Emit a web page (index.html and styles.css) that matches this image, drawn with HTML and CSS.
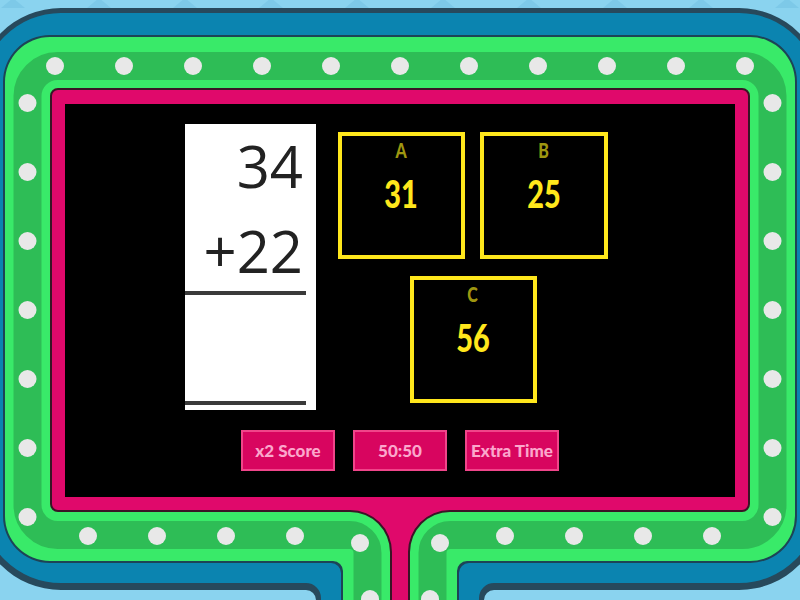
FILE: index.html
```html
<!DOCTYPE html>
<html lang="en">
<head>
<meta charset="utf-8">
<title>Gameshow quiz</title>
<link rel="stylesheet" href="styles.css">
</head>
<body>
<div class="stage">
  <svg class="frame" viewBox="0 0 800 600" width="800" height="600" aria-hidden="true">
    <rect width="800" height="600" fill="#8ad3ef"/>
    <g fill="#7dc9e8">
      <polygon points="1,8 13,-2 25,8"/><polygon points="87,8 99,-2 111,8"/><polygon points="173,8 185,-2 197,8"/>
      <polygon points="259,8 271,-2 283,8"/><polygon points="345,8 357,-2 369,8"/><polygon points="431,8 443,-2 455,8"/>
      <polygon points="517,8 529,-2 541,8"/><polygon points="603,8 615,-2 627,8"/><polygon points="689,8 701,-2 713,8"/>
      <polygon points="775,8 787,-2 799,8"/>
    </g>
    <path fill="#27495c" d="M61 8H739A85 85 0 0 1 824 93V505A85 85 0 0 1 739 590H494A10 10 0 0 0 484 600H316A10 10 0 0 0 306 590H61A85 85 0 0 1 -24 505V93A85 85 0 0 1 61 8Z"/>
    <path fill="#0b84b0" d="M61 13H739A80 80 0 0 1 819 93V503A80 80 0 0 1 739 583H494A15 15 0 0 0 479 598V600H321V598A15 15 0 0 0 306 583H61A80 80 0 0 1 -19 503V93A80 80 0 0 1 61 13Z"/>
    <path fill="#1d4456" d="M50 35H750A47 47 0 0 1 797 82V516A47 47 0 0 1 750 563H469A10 10 0 0 0 459 573V600H341V573A10 10 0 0 0 331 563H50A47 47 0 0 1 3 516V82A47 47 0 0 1 50 35Z"/>
    <path fill="#39ea69" d="M50 37H750A45 45 0 0 1 795 82V516A45 45 0 0 1 750 561H467A10 10 0 0 0 457 571V600H343V571A10 10 0 0 0 333 561H50A45 45 0 0 1 5 516V82A45 45 0 0 1 50 37Z"/>
    <path fill="none" stroke="#2ebd56" stroke-width="28" d="M367.5 610V553A18 18 0 0 0 349.5 535H57.5A30 30 0 0 1 27.5 505V96A30 30 0 0 1 57.5 66H742.5A30 30 0 0 1 772.5 96V505A30 30 0 0 1 742.5 535H450.5A18 18 0 0 0 432.5 553V610"/>
    <g fill="#e8e8e8">
      <circle cx="55" cy="66" r="9"/><circle cx="124" cy="66" r="9"/><circle cx="193" cy="66" r="9"/>
      <circle cx="262" cy="66" r="9"/><circle cx="331" cy="66" r="9"/><circle cx="400" cy="66" r="9"/>
      <circle cx="469" cy="66" r="9"/><circle cx="538" cy="66" r="9"/><circle cx="607" cy="66" r="9"/>
      <circle cx="676" cy="66" r="9"/><circle cx="745" cy="66" r="9"/>
      <circle cx="27.5" cy="103" r="9"/><circle cx="27.5" cy="172" r="9"/><circle cx="27.5" cy="241" r="9"/>
      <circle cx="27.5" cy="310" r="9"/><circle cx="27.5" cy="379" r="9"/><circle cx="27.5" cy="448" r="9"/>
      <circle cx="27.5" cy="517" r="9"/>
      <circle cx="772.5" cy="103" r="9"/><circle cx="772.5" cy="172" r="9"/><circle cx="772.5" cy="241" r="9"/>
      <circle cx="772.5" cy="310" r="9"/><circle cx="772.5" cy="379" r="9"/><circle cx="772.5" cy="448" r="9"/>
      <circle cx="772.5" cy="517" r="9"/>
      <circle cx="88" cy="536" r="9"/><circle cx="157" cy="536" r="9"/><circle cx="226" cy="536" r="9"/>
      <circle cx="295" cy="536" r="9"/><circle cx="360" cy="543" r="9"/><circle cx="370" cy="599" r="9"/>
      <circle cx="440" cy="543" r="9"/><circle cx="430" cy="599" r="9"/>
      <circle cx="505" cy="536" r="9"/><circle cx="574" cy="536" r="9"/><circle cx="643" cy="536" r="9"/>
      <circle cx="712" cy="536" r="9"/>
    </g>
    <path fill="#3a1526" d="M58 88H742A8 8 0 0 1 750 96V504A8 8 0 0 1 742 512H450A40 40 0 0 0 410 552V600H390V552A40 40 0 0 0 350 512H58A8 8 0 0 1 50 504V96A8 8 0 0 1 58 88Z"/>
    <path fill="#e0096b" d="M58 90H742A6 6 0 0 1 748 96V504A6 6 0 0 1 742 510H450A42 42 0 0 0 408 552V600H392V552A42 42 0 0 0 350 510H58A6 6 0 0 1 52 504V96A6 6 0 0 1 58 90Z"/>
  </svg>

  <main class="screen">
    <div class="quiz">
      <div class="card">
        <div class="sum"><span>34</span><span>+22</span></div>
        <div class="rule"></div>
        <div class="rule rule-end"></div>
      </div>
      <div class="answers">
        <div class="answer"><span class="letter">A</span><span class="value">31</span></div>
        <div class="answer"><span class="letter">B</span><span class="value">25</span></div>
        <div class="answer answer-c"><span class="letter">C</span><span class="value">56</span></div>
      </div>
    </div>
    <div class="powerups">
      <div class="powerup">x2 Score</div>
      <div class="powerup">50:50</div>
      <div class="powerup">Extra Time</div>
    </div>
  </main>
</div>
</body>
</html>
```

FILE: styles.css
```css
* {
  box-sizing: border-box;
}

body {
  margin: 0;
  background: #8ad3ef;
  font-family: "Lato", "Liberation Sans", sans-serif;
}

.stage {
  display: grid;
  width: 800px;
  height: 600px;
  overflow: hidden;
}

.frame,
.screen {
  grid-area: 1 / 1;
}

.frame {
  display: block;
}

.screen {
  margin: 104px 0 0 65px;
  width: 670px;
  height: 393px;
  background: #000;
  display: flex;
  flex-direction: column;
  align-items: center;
  padding-top: 20px;
}

.quiz {
  display: flex;
  gap: 22px;
  align-items: flex-start;
  margin-right: 7px;
}

.card {
  width: 131px;
  height: 286px;
  background: #fff;
  display: flex;
  flex-direction: column;
}

.sum {
  display: flex;
  flex-direction: column;
  align-items: flex-end;
  gap: 5px;
  padding: 2px 13px 0 0;
  font: 400 58px/80px "Open Sans", sans-serif;
  color: #222;
}

.rule {
  width: 121px;
  height: 4px;
  background: #3a3a3a;
}

.rule-end {
  margin-top: 106px;
}

.answers {
  display: grid;
  grid-template-columns: 127px 128px;
  column-gap: 15px;
  row-gap: 17px;
  margin-top: 8px;
}

.answer {
  height: 127px;
  border: 4px solid #ffe71c;
  display: flex;
  flex-direction: column;
  align-items: center;
  padding-top: 2px;
}

.answer-c {
  grid-column: 1 / span 2;
  justify-self: center;
  width: 127px;
}

.letter {
  font: 900 20px/24px "Lato", sans-serif;
  color: #9e9610;
  transform: scaleX(0.8);
}

.value {
  margin-top: 8px;
  font: 900 38px/46px "Lato", sans-serif;
  color: #ffe71c;
  transform: scaleX(0.76);
}

.powerups {
  display: flex;
  gap: 18px;
  margin-top: 20px;
}

.powerup {
  width: 94px;
  height: 41px;
  background: #d8055f;
  border: 2px solid #f0458a;
  color: #fba7cc;
  font: 900 17px/1 "Lato", sans-serif;
  display: flex;
  align-items: center;
  justify-content: center;
}
```
